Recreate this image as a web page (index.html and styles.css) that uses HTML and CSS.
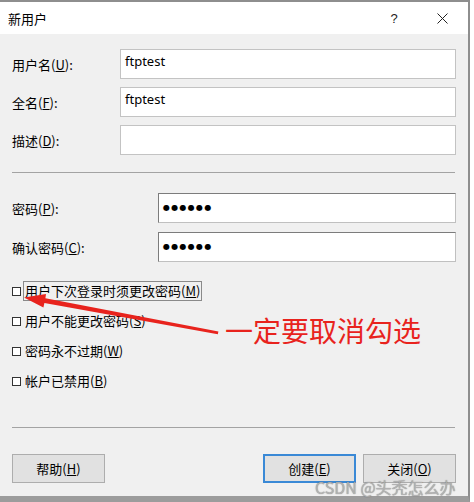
FILE: index.html
```html
<!DOCTYPE html>
<html lang="zh-CN">
<head>
<meta charset="utf-8">
<title>新用户</title>
<link rel="stylesheet" href="styles.css">
</head>
<body>
<div class="window">
  <div class="titlebar">
    <span class="title">新用户</span>
    <div class="tb-btns">
      <span class="help">?</span>
      <svg class="close" width="11" height="11" viewBox="0 0 11 11"><path d="M0.5 0.5 L10.5 10.5 M10.5 0.5 L0.5 10.5" stroke="#222" stroke-width="1" fill="none"/></svg>
    </div>
  </div>
  <div class="content">
    <div class="group g1">
      <div class="row"><label class="lbl">用户名(<u>U</u>):</label><div class="input">ftptest</div></div>
      <div class="row"><label class="lbl">全名(<u>F</u>):</label><div class="input">ftptest</div></div>
      <div class="row"><label class="lbl">描述(<u>D</u>):</label><div class="input"></div></div>
    </div>
    <div class="sep sep1"></div>
    <div class="group g2">
      <div class="row"><label class="lbl">密码(<u>P</u>):</label><div class="input pwd"><span class="dots">●●●●●●</span></div></div>
      <div class="row"><label class="lbl">确认密码(<u>C</u>):</label><div class="input pwd"><span class="dots">●●●●●●</span></div></div>
    </div>
    <div class="checks">
      <div class="check"><span class="box"></span><span class="ctext focus">用户下次登录时须更改密码(<u>M</u>)</span></div>
      <div class="check"><span class="box"></span><span class="ctext">用户不能更改密码(<u>S</u>)</span></div>
      <div class="check"><span class="box"></span><span class="ctext">密码永不过期(<u>W</u>)</span></div>
      <div class="check"><span class="box"></span><span class="ctext">帐户已禁用(<u>B</u>)</span></div>
    </div>
    <div class="sep sep2"></div>
    <div class="buttons">
      <div class="btn">帮助(<u>H</u>)</div>
      <div class="spacer"></div>
      <div class="btn primary">创建(<u>E</u>)</div>
      <div class="btn">关闭(<u>O</u>)</div>
    </div>
  </div>
  <svg class="arrow" width="474" height="502" viewBox="0 0 474 502">
    <polygon points="24,297.5 46,294 45.4,298.3 218.4,331.6 217.8,334.2 44.4,303 43.4,307.5" fill="#e8231d"/>
  </svg>
  <div class="note">一定要取消勾选</div>
  <div class="watermark">CSDN @头秃怎么办</div>
</div>
</body>
</html>
```
FILE: styles.css
```css
html, body {
  margin: 0;
  padding: 0;
  background: #ffffff;
}
body {
  width: 474px;
  height: 502px;
  overflow: hidden;
  font-family: "Noto Sans CJK SC", "Noto Sans", sans-serif;
  font-size: 13px;
  color: #000;
}
.window {
  position: relative;
  width: 468px;
  border-top: 2px solid #8e8e8e;
  border-right: 2px solid #8e8e8e;
  border-bottom: 6px solid #9c9c9c;
}
.titlebar {
  height: 32px;
  background: #fff;
  display: flex;
  align-items: center;
  padding: 0 0 0 8px;
}
.title {
  flex: 1;
  font-size: 13px;
  line-height: 18px;
  margin-top: 1px;
}
.tb-btns {
  display: flex;
  align-items: center;
  margin-right: 20px;
}
.help {
  width: 12px;
  text-align: center;
  font-family: "Liberation Sans", sans-serif;
  font-size: 13px;
  color: #222;
  margin-right: 37px;
}
.close {
  display: block;
}
.content {
  height: 462px;
  box-sizing: border-box;
  background: #f0f0f0;
  padding: 15px 12px 0 12px;
}
.group {
  display: flex;
  flex-direction: column;
}
.g1 {
  gap: 8px;
}
.g2 {
  gap: 9px;
}
.row {
  display: flex;
  align-items: center;
  height: 30px;
}
.g1 .lbl {
  width: 108px;
}
.g2 .lbl {
  width: 146px;
}
.lbl {
  line-height: 18px;
  margin-top: 1px;
}
.input {
  flex: 1;
  height: 30px;
  box-sizing: border-box;
  background: #fff;
  border: 1px solid #c3c3c3;
  padding: 2px 4px 0 4px;
  line-height: 18px;
  font-family: "Noto Sans", sans-serif;
  font-size: 13px;
}
.input.pwd {
  border-color: #7c7c7c #c0c0c0 #c0c0c0 #7c7c7c;
  display: flex;
  align-items: center;
  padding: 0 4px;
}
.dots {
  font-family: "DejaVu Sans", sans-serif;
  font-size: 8px;
  letter-spacing: 1.3px;
  line-height: 10px;
}
.sep {
  height: 1px;
  background: #a3a3a3;
  width: 443px;
}
.sep1 {
  margin: 17px 0 20px 0;
}
.checks {
  display: flex;
  flex-direction: column;
  gap: 10px;
  margin-top: 19px;
}
.check {
  display: flex;
  align-items: center;
  height: 20px;
}
.box {
  width: 7px;
  height: 7px;
  border: 1px solid #333;
  background: #fff;
  margin-right: 2px;
  margin-top: 1px;
}
.ctext {
  line-height: 18px;
  padding: 0 1px;
  border: 1px solid transparent;
}
.ctext.focus {
  border-color: #8a8a8a;
}
.sep2 {
  margin-top: 36px;
}
.buttons {
  display: flex;
  gap: 7px;
  margin-top: 26px;
}
.spacer {
  flex: 1;
}
.btn {
  width: 93px;
  height: 29px;
  box-sizing: border-box;
  background: #e1e1e1;
  border: 1px solid #adadad;
  display: flex;
  align-items: center;
  justify-content: center;
  line-height: 18px;
}
.btn.primary {
  border: 2px solid #3a89d6;
}
.arrow {
  position: absolute;
  left: 0;
  top: -2px;
  pointer-events: none;
}
.note {
  position: absolute;
  left: 225px;
  top: 314px;
  font-size: 28px;
  line-height: 28px;
  color: #e8231d;
  white-space: nowrap;
}
.watermark {
  position: absolute;
  left: 315px;
  top: 476px;
  font-size: 16px;
  line-height: 18px;
  color: rgba(185, 185, 185, 0.85);
  text-shadow: 0 0 1px rgba(70, 70, 70, 0.7);
  white-space: nowrap;
}
```
